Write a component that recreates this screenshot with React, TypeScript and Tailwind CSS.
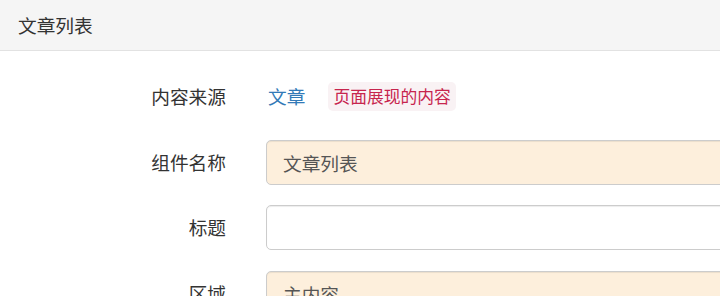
const font = { fontFamily: '"Noto Sans CJK SC", "Liberation Sans", sans-serif' };

const Field = ({
  label,
  children,
  last,
}: {
  label: string;
  children: React.ReactNode;
  last?: boolean;
}) => (
  <div className={`flex items-center ${last ? "" : "mb-[20.5px]"}`}>
    <label className="w-[226px] shrink-0 text-right text-[18.7px] text-[#333]">
      {label}
    </label>
    <div className="ml-[40px] grow min-w-0">{children}</div>
  </div>
);

const Input = ({ value, tinted }: { value?: string; tinted?: boolean }) => (
  <input
    readOnly
    value={value ?? ""}
    className={`block h-[45px] w-[600px] rounded-[5px] border border-[#ccc] px-[16px] text-[18.7px] text-[#555] shadow-[inset_0_1px_1px_rgba(0,0,0,0.075)] outline-none ${
      tinted ? "bg-[#fdefdc]" : "bg-white"
    }`}
    style={font}
  />
);

export default function App() {
  return (
    <div className="w-[720px] h-[296px] overflow-hidden bg-white" style={font}>
      <div className="h-[51px] flex items-center px-[18px] bg-[#f5f5f5] border-b border-[#e2e2e2]">
        <h4 className="text-[18.7px] text-[#333]">文章列表</h4>
      </div>

      <div className="pt-[23px]">
        <Field label="内容来源">
          <div className="h-[45px] flex items-center">
            <a className="text-[18.7px] text-[#337ab7] ml-[2px]">文章</a>
            <code
              className="ml-[23px] rounded-[5px] bg-[#f9f2f4] px-[5px] py-[2px] text-[16.8px] text-[#c7254e]"
              style={font}
            >
              页面展现的内容
            </code>
          </div>
        </Field>
        <Field label="组件名称">
          <Input value="文章列表" tinted />
        </Field>
        <Field label="标题">
          <Input />
        </Field>
        <Field label="区域" last>
          <Input value="主内容" tinted />
        </Field>
      </div>
    </div>
  );
}
